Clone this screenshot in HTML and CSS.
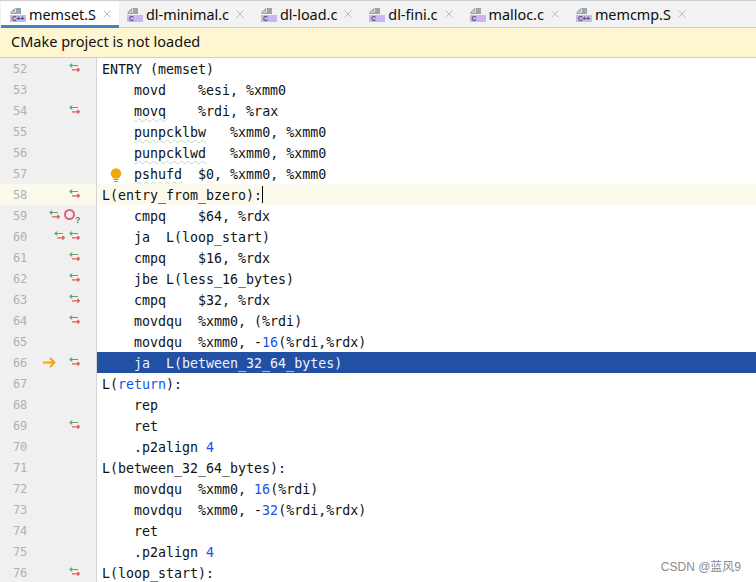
FILE: index.html
```html
<!DOCTYPE html>
<html lang="en">
<head>
<meta charset="utf-8">
<title>memset.S</title>
<link rel="stylesheet" href="styles.css">
</head>
<body>
<svg class="defs" width="0" height="0" aria-hidden="true">
  <defs>
    <symbol id="step" viewBox="0 0 11 9">
      <path d="M1 2.5H9M3.2 .6 1 2.5 3.2 4.4" fill="none" stroke="#59a869" stroke-width="1.2"/>
      <path d="M3 6.8H10.4M8.4 5 10.4 6.8 8.4 8.6" fill="none" stroke="#e05555" stroke-width="1.2"/>
    </symbol>
    <symbol id="file" viewBox="0 0 16 16">
      <path d="M5 1H11V7H0.5V5Z" fill="#9aa7b0"/>
      <path d="M5.5 1.5V5H2" fill="none" stroke="#e8e8e8" stroke-width="1"/>
      <path d="M0 8H16V15H0Z" fill="#c9b6f2"/>
    </symbol>
    <symbol id="close" viewBox="0 0 8 8">
      <path d="M.5 .5 7.5 7.5M7.5 .5 .5 7.5" fill="none" stroke="#bdbdbd" stroke-width="1"/>
    </symbol>
  </defs>
</svg>
<nav class="tabs">
  <div class="tab tab-active"><span class="ficon"><svg width="16" height="16"><use href="#file"/></svg><b class="ftype">C++</b></span><span class="tname">memset.S</span><svg class="x"><use href="#close"/></svg></div>
  <div class="tab"><span class="ficon"><svg width="16" height="16"><use href="#file"/></svg><b class="ftype">C</b></span><span class="tname">dl-minimal.c</span><svg class="x"><use href="#close"/></svg></div>
  <div class="tab"><span class="ficon"><svg width="16" height="16"><use href="#file"/></svg><b class="ftype">C</b></span><span class="tname">dl-load.c</span><svg class="x"><use href="#close"/></svg></div>
  <div class="tab"><span class="ficon"><svg width="16" height="16"><use href="#file"/></svg><b class="ftype">C</b></span><span class="tname">dl-fini.c</span><svg class="x"><use href="#close"/></svg></div>
  <div class="tab"><span class="ficon"><svg width="16" height="16"><use href="#file"/></svg><b class="ftype">C</b></span><span class="tname">malloc.c</span><svg class="x"><use href="#close"/></svg></div>
  <div class="tab"><span class="ficon"><svg width="16" height="16"><use href="#file"/></svg><b class="ftype">C++</b></span><span class="tname">memcmp.S</span><svg class="x"><use href="#close"/></svg></div>
</nav>
<div class="notice">CMake project is not loaded</div>
<main class="editor">
  <div class="row"><div class="gutter"><span class="num">52</span><svg class="step s2"><use href="#step"/></svg></div><div class="code">ENTRY (memset)</div></div>
  <div class="row"><div class="gutter"><span class="num">53</span></div><div class="code">    movd    %esi, %xmm0</div></div>
  <div class="row"><div class="gutter"><span class="num">54</span><svg class="step s2"><use href="#step"/></svg></div><div class="code">    <u>movq</u>    %rdi, %rax</div></div>
  <div class="row"><div class="gutter"><span class="num">55</span></div><div class="code">    <u>punpcklbw</u>   %xmm0, %xmm0</div></div>
  <div class="row"><div class="gutter"><span class="num">56</span></div><div class="code">    <u>punpcklwd</u>   %xmm0, %xmm0</div></div>
  <div class="row"><div class="gutter"><span class="num">57</span></div><div class="code"><svg class="bulb" width="12" height="15" viewBox="0 0 12 15"><circle cx="6" cy="5.5" r="5.2" fill="#f2a60c"/><path d="M3.5 11.5H8.5M4 13.5H8" stroke="#8c8c8c" stroke-width="1"/></svg>    <u>pshufd</u>  $0, %xmm0, %xmm0</div></div>
  <div class="row row-caret"><div class="gutter"><span class="num">58</span><svg class="step s2"><use href="#step"/></svg></div><div class="code">L(entry_from_bzero):<i class="caret"></i></div></div>
  <div class="row"><div class="gutter"><span class="num">59</span><svg class="step s0"><use href="#step"/></svg><span class="bp"></span><span class="q">?</span></div><div class="code">    cmpq    $64, %rdx</div></div>
  <div class="row"><div class="gutter"><span class="num">60</span><svg class="step s1"><use href="#step"/></svg><svg class="step s2"><use href="#step"/></svg></div><div class="code">    ja  L(loop_start)</div></div>
  <div class="row"><div class="gutter"><span class="num">61</span><svg class="step s2"><use href="#step"/></svg></div><div class="code">    cmpq    $16, %rdx</div></div>
  <div class="row"><div class="gutter"><span class="num">62</span><svg class="step s2"><use href="#step"/></svg></div><div class="code">    jbe L(less_16_bytes)</div></div>
  <div class="row"><div class="gutter"><span class="num">63</span><svg class="step s2"><use href="#step"/></svg></div><div class="code">    cmpq    $32, %rdx</div></div>
  <div class="row"><div class="gutter"><span class="num">64</span><svg class="step s2"><use href="#step"/></svg></div><div class="code">    movdqu  %xmm0, (%rdi)</div></div>
  <div class="row"><div class="gutter"><span class="num">65</span></div><div class="code">    movdqu  %xmm0, -<span class="n">16</span>(%rdi,%rdx)</div></div>
  <div class="row row-exec"><div class="gutter"><span class="num">66</span><svg class="exec" width="13" height="11" viewBox="0 0 13 11"><path d="M0 5.5H11.5M7 1 11.5 5.5 7 10" fill="none" stroke="#f2a60c" stroke-width="1.8"/></svg><svg class="step s2"><use href="#step"/></svg></div><div class="code">    ja  L(between_32_64_bytes)</div></div>
  <div class="row"><div class="gutter"><span class="num">67</span></div><div class="code">L(<span class="n">return</span>):</div></div>
  <div class="row"><div class="gutter"><span class="num">68</span></div><div class="code">    rep</div></div>
  <div class="row"><div class="gutter"><span class="num">69</span><svg class="step s2"><use href="#step"/></svg></div><div class="code">    ret</div></div>
  <div class="row"><div class="gutter"><span class="num">70</span></div><div class="code">    .p2align <span class="n">4</span></div></div>
  <div class="row"><div class="gutter"><span class="num">71</span></div><div class="code">L(between_32_64_bytes):</div></div>
  <div class="row"><div class="gutter"><span class="num">72</span></div><div class="code">    movdqu  %xmm0, <span class="n">16</span>(%rdi)</div></div>
  <div class="row"><div class="gutter"><span class="num">73</span></div><div class="code">    movdqu  %xmm0, -<span class="n">32</span>(%rdi,%rdx)</div></div>
  <div class="row"><div class="gutter"><span class="num">74</span></div><div class="code">    ret</div></div>
  <div class="row"><div class="gutter"><span class="num">75</span></div><div class="code">    .p2align <span class="n">4</span></div></div>
  <div class="row"><div class="gutter"><span class="num">76</span><svg class="step s2"><use href="#step"/></svg></div><div class="code">L(loop_start):</div></div>
  <div class="watermark">CSDN @蓝风9</div>
</main>
</body>
</html>
```
FILE: styles.css
```css
html, body { margin: 0; padding: 0; }
body {
  width: 756px;
  height: 582px;
  overflow: hidden;
  background: #fff;
  font-family: "Noto Sans", sans-serif;
  color: #000;
}
.defs { position: absolute; }
.tabs {
  display: flex;
  height: 26px;
  background: #f2f2f2;
  border-top: 1px solid #d0d0d0;
  border-bottom: 1px solid #d1d1d1;
  padding-left: 1px;
}
.tab {
  display: flex;
  align-items: center;
  height: 26px;
  padding: 0 9px 0 8px;
  font-size: 14.4px;
  position: relative;
}
.tab-active { background: #fff; padding: 0 8px 0 9px; }
.tab-active::after {
  content: "";
  position: absolute;
  left: 0; right: 0; bottom: -1px;
  height: 3px;
  background: #4083c9;
}
.ficon { position: relative; width: 16px; height: 16px; margin: 2px 3px 0 0; }
.ficon svg { display: block; }
.ftype {
  position: absolute;
  left: 2px; top: 8px;
  font: 700 6.5px/7px "Liberation Sans", sans-serif;
  color: #4a4a5e;
}
.tname { color: #0c0c0c; }
.x { width: 8px; height: 8px; margin-left: 7px; flex: none; }
.notice {
  height: 29px;
  line-height: 27px;
  background: #fdf6d0;
  border-bottom: 1px solid #d4d0c0;
  padding-left: 11px;
  font-size: 14.5px;
  color: #111;
}
.editor { position: relative; }
.row { display: flex; height: 21px; }
.gutter {
  position: relative;
  flex: none;
  width: 96px;
  background: #f0f0f0;
  border-right: 1px solid #d5d5d5;
}
.num {
  position: absolute;
  left: 13px;
  top: 1px;
  font: 12px/21px "DejaVu Sans Mono", monospace;
  letter-spacing: -0.2px;
  color: #b0b0b0;
}
.code {
  position: relative;
  flex: 1;
  box-sizing: border-box;
  padding: 1px 0 0 5px;
  height: 21px;
  white-space: pre;
  font: 13.3px/21px "DejaVu Sans Mono", monospace;
  color: #111;
}
.row-caret .gutter, .row-caret .code { background: #fcfaed; }
.row-exec .code { background: #2150a5; color: #eef2fa; }
.caret {
  display: inline-block;
  width: 1px;
  height: 17px;
  background: #000;
  vertical-align: -3px;
}
.n { color: #1750eb; }
u {
  text-decoration: underline wavy #b9dcb9 1px;
  text-decoration-skip-ink: none;
  text-underline-offset: 2px;
}
.step { position: absolute; top: 5px; width: 11px; height: 9px; }
.s0 { left: 49px; }
.s1 { left: 54px; }
.s2 { left: 69px; }
.exec { position: absolute; left: 43px; top: 5px; }
.bp {
  position: absolute;
  left: 64px; top: 4px;
  width: 7px; height: 7px;
  border: 2px solid #e0607a;
  border-radius: 50%;
}
.q {
  position: absolute;
  left: 75px; top: 10px;
  font: 700 9px/10px "Liberation Sans", sans-serif;
  color: #777;
}
.bulb { position: absolute; left: 13px; top: 5px; }
.watermark {
  position: absolute;
  right: 15px;
  top: 500px;
  font: 12px/18px "Liberation Sans", "Noto Sans CJK SC", sans-serif;
  color: #8c8c8c;
}
```
